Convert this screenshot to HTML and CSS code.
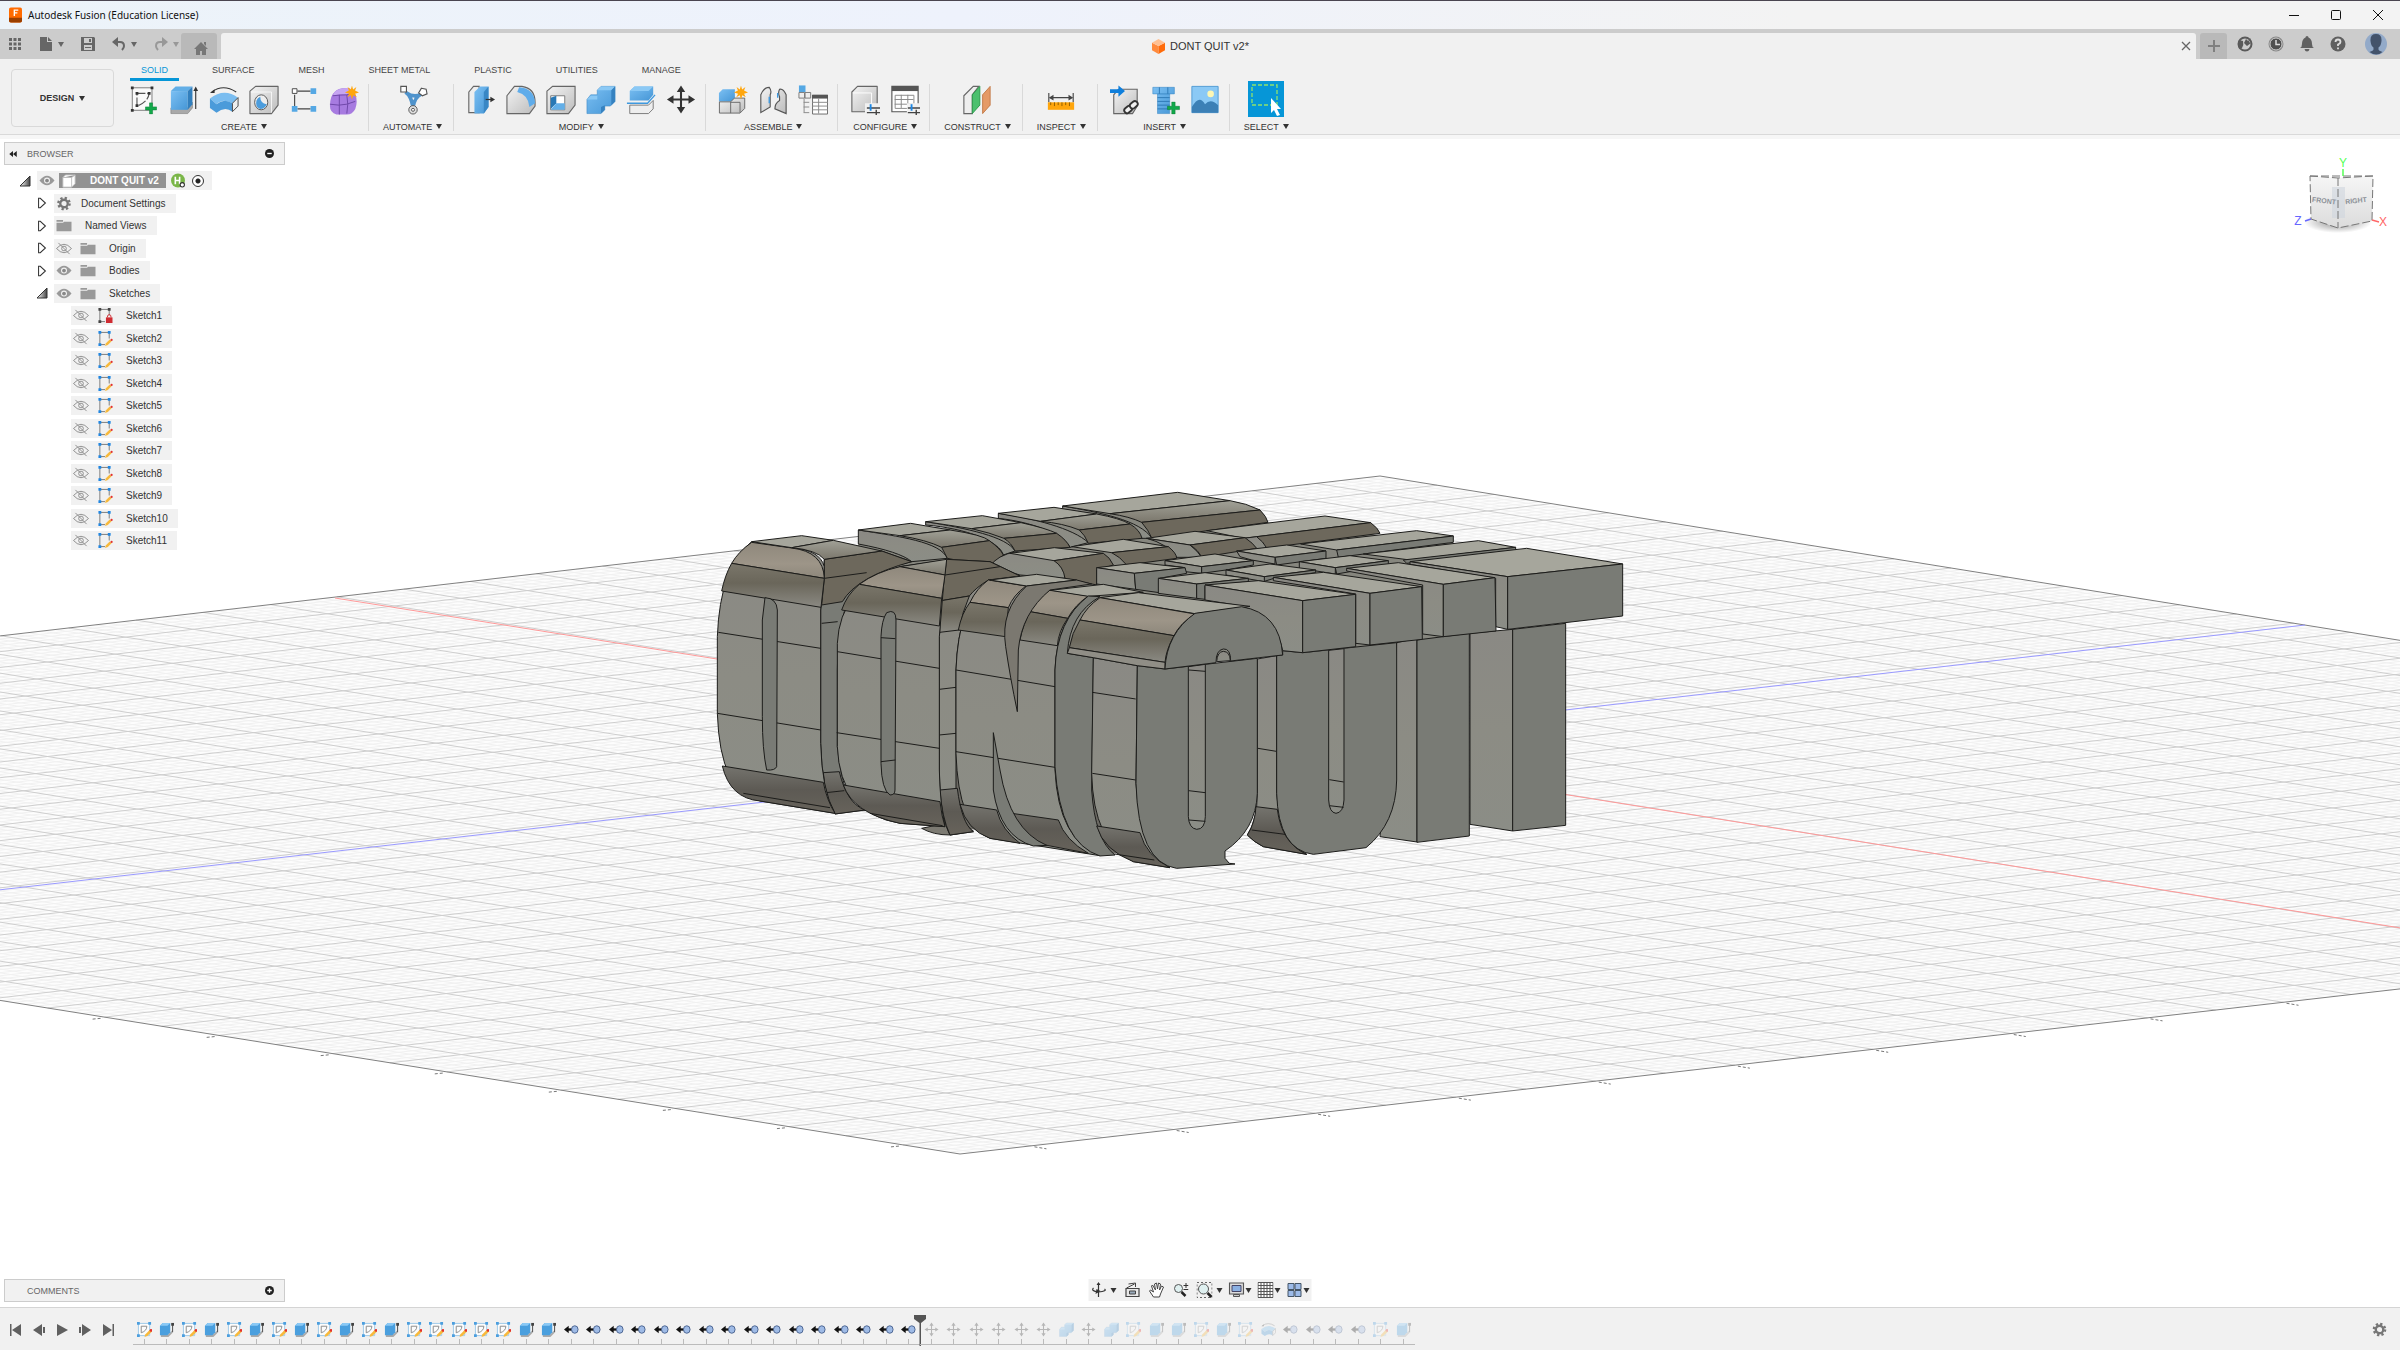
FILE: index.html
```
<!DOCTYPE html>
<html lang="en">
<head>
    <meta charset="UTF-8">
    <title>Autodesk Fusion (Education License)</title>
    <link rel="stylesheet" href="styles.css">
</head>
<body>
    <!-- Shared icons -->
    <svg class="sprite" aria-hidden="true">
        <defs>
            <linearGradient id="gBlue" x1="0" y1="0" x2="1" y2="1"><stop offset="0" stop-color="#7cc0f3"/><stop offset="1" stop-color="#4596d6"/></linearGradient>
            <linearGradient id="gGray" x1="0" y1="0" x2="1" y2="1"><stop offset="0" stop-color="#f4f4f4"/><stop offset="1" stop-color="#bcbcbc"/></linearGradient>
            <linearGradient id="gTri" x1="0" y1="0" x2="1" y2="0"><stop offset="0" stop-color="#fff"/><stop offset="1" stop-color="#444"/></linearGradient>
        </defs>
        <symbol id="i-star" viewBox="0 0 16 16"><path fill="#ffa60d" d="M8 0l1.300 4.500 3.700-2.800-1.500 4.100L16 8l-4.500 1.500 2 4-4-2.200L8 16l-1.300-4.700-4 2.200 2-4L0 8l4.500-2.200L3 1.700l3.700 2.800z"/></symbol>
        <symbol id="i-plus" viewBox="0 0 12 12"><path fill="#12a84a" stroke="#0c8136" stroke-width=".5" d="M4.500.5h3v4h4v3h-4v4h-3v-4h-4v-3h4z"/></symbol>
        <symbol id="i-sketch" viewBox="0 0 32 32">
            <path fill="#fafafa" stroke="#777" d="M3.500 3.500h21v24h-21z"/>
            <path fill="none" stroke="#555" stroke-width="1.200" d="M8.500 9.500h13q-1 9-13 13.500z" stroke-dasharray="9 2"/>
            <path fill="#333" d="M2 2h3v3H2zM23 2h3v3h-3zM2 26h3v3H2zM7 8h3v3H7zM20 8h3v3h-3zM7 21h3v3H7z"/>
            <use href="#i-plus" x="17" y="19" width="13" height="13"/>
        </symbol>
        <symbol id="i-extrude" viewBox="0 0 32 32">
            <path fill="#a9a9a9" stroke="#777" stroke-width=".6" d="M2 25l18 0 5-6v6l-5 6H2z"/>
            <path fill="#62aee6" d="M2 7l5-5h18l-5 5z"/><path fill="url(#gBlue)" d="M2 7h18v20H2z"/><path fill="#327fbd" d="M20 7l5-5v19l-5 6z"/>
            <path stroke="#333" stroke-width="1.200" d="M28.500 26V4"/><path fill="#333" d="M26 7l2.500-5L31 7z"/>
        </symbol>
        <symbol id="i-revolve" viewBox="0 0 32 32">
            <path fill="none" stroke="#333" stroke-width="1.200" d="M3 8q12-9 26 0"/><path fill="#333" d="M1 9l5-4v4z"/>
            <path fill="#7abdf0" d="M1 15Q16 3 31 14l-6 6Q15 14 8 21z"/><path fill="#4b9bda" d="M1 15l7 6v9l-7-5zM8 21q8-7 17-1v9q-8-6-17 1z"/><path fill="#eee" stroke="#444" d="M25 20l6-6v9l-6 6z"/>
        </symbol>
        <symbol id="i-hole" viewBox="0 0 32 32">
            <path fill="url(#gGray)" stroke="#666" stroke-width="1.200" stroke-linejoin="round" d="M1 7l6-5h24v20l-7 9H1z"/><path fill="none" stroke="#fff" stroke-width=".8" d="M2 8h22v22"/>
            <ellipse cx="13" cy="19" rx="7" ry="8" fill="#eee" stroke="#555"/><path fill="#4c9ddd" d="M12 13q0 7 7 8-2 5-7 5-6-2-4-9 1-3 4-4z"/>
        </symbol>
        <symbol id="i-pattern" viewBox="0 0 32 32">
            <path stroke="#444" stroke-width="1.200" d="M9 7h14M9 26h14M6 11v12"/><path fill="#fff" stroke="#444" d="M3.500 4.500h5v5h-5z"/><path fill="#55a8e4" d="M23 4h6v6h-6zM3 23h6v6H3zM23 23h6v6h-6z"/>
        </symbol>
        <symbol id="i-form" viewBox="0 0 32 32">
            <path fill="#a77be0" d="M6 8q4-5 16-4l6 6q3 8 0 16-3 6-9 6H8q-7-2-7-9 0-11 5-15z"/><path fill="#c6a5f1" d="M6 8q6-5 16-4l5 5q-5 1-8 2-8-1-15 1z"/><path fill="none" stroke="#6d45a6" d="M1 21q10 2 18 0l9-3M11 11v21M19 11q2 10 0 20M4 12q8-1 15-1l8-2"/>
            <use href="#i-star" x="17" y="1" width="15" height="15"/>
        </symbol>
        <symbol id="i-automate" viewBox="0 0 32 32">
            <path fill="none" stroke="#4f93cc" stroke-width="4" d="M8 8q6 4 8 16M25 10q-7 3-9 14M9 9q7 5 15 2"/><path fill="#fff" stroke="#555" stroke-width="1.200" d="M3 2h6v6H3zM25 4l5 1 1 5-5 2-4-3z"/><circle cx="16" cy="27" r="4.500" fill="#ddd" stroke="#555"/><circle cx="16" cy="27" r="1.600" fill="#fff" stroke="#555"/>
        </symbol>
        <symbol id="i-presspull" viewBox="0 0 32 32">
            <path fill="#eee" stroke="#666" stroke-width="1.200" d="M3 8l5-6h6v28H3z"/><path fill="url(#gBlue)" d="M9 8l6-6h9v22l-5 7H9z"/><path fill="#3987c5" d="M19 8l5-6v22l-5 7z"/><path stroke="#333" stroke-width="1.300" d="M21 16h7"/><path fill="#333" d="M26 13l5 3-5 3z"/>
        </symbol>
        <symbol id="i-fillet" viewBox="0 0 32 32">
            <path fill="url(#gGray)" stroke="#666" stroke-width="1.200" d="M1 12L9 2h8q14 2 14 17v4l-6 8H1z"/><path fill="#5facea" d="M14 3q16 1 17 17l-6 4Q24 11 12 8z"/>
        </symbol>
        <symbol id="i-shell" viewBox="0 0 32 32">
            <path fill="url(#gGray)" stroke="#666" stroke-width="1.200" d="M1 7l6-5h24v20l-7 9H1z"/><path fill="#fff" stroke="#777" d="M5 12h15v15H5z"/><path fill="#2878b5" d="M5 14l6-2v8l-6 6z"/><path fill="#63afe8" d="M5 27l6-7h9v7z"/>
        </symbol>
        <symbol id="i-combine" viewBox="0 0 32 32">
            <path fill="url(#gBlue)" stroke="#3c89c6" stroke-width=".6" d="M1 16l4-5h7V6l4-4h15v16l-5 5h-6v4l-4 4H1z"/><path fill="#8bc9f5" d="M1 16l4-4h7v4zM12 6l4-4h15l-4 4z"/><path fill="#3682c0" d="M27 6l4-4v16l-4 4zM16 24l4-2v5l-4 4z"/>
        </symbol>
        <symbol id="i-offset" viewBox="0 0 32 32">
            <path fill="url(#gBlue)" d="M4 7l5-5h20v9l-5 6H4z"/><path fill="#8bc9f5" d="M4 7l5-5h20l-5 5z"/><path fill="#eee" stroke="#777" d="M4 22h20l5-5v9l-5 5H4z"/><path fill="none" stroke="#3e99df" stroke-width="1.400" d="M1 20h22l8-9"/>
        </symbol>
        <symbol id="i-move" viewBox="0 0 32 32">
            <path stroke="#333" stroke-width="2.200" d="M16 5v22M5 16h22"/><path fill="#333" d="M16 1l4.500 7h-9zM16 31l4.500-7h-9zM1 16l7-4.500v9zM31 16l-7-4.500v9z"/>
        </symbol>
        <symbol id="i-component" viewBox="0 0 32 32">
            <path fill="url(#gBlue)" d="M1 9l4-4h13v13H1z"/><path fill="url(#gGray)" stroke="#666" d="M1.500 18.500h12l4-4h11v11l-5 5h-22zM13.500 18.500v12M13.500 19h10v11"/><use href="#i-star" x="17" y="1" width="15" height="15"/>
        </symbol>
        <symbol id="i-joint" viewBox="0 0 32 32">
            <path fill="url(#gGray)" stroke="#555" stroke-width="1.200" d="M3 11q3-8 9-8 3 4 1 8v13L3 30zM30 11q-3-7-7-6-2 4 0 8v4q-5 3-5 9l12 5z"/><path fill="none" stroke="#3e99df" stroke-width="1.500" d="M12 13v7M21 9v5"/>
        </symbol>
        <symbol id="i-bom" viewBox="0 0 32 32">
            <path fill="#55a8e4" d="M1 1h7v7H1z"/><path fill="#eee" stroke="#777" d="M1 8.500h6v6H1zM7.500 8.500h6v6h-6z"/><path fill="none" stroke="#888" d="M6.500 15v15M6 19h6M6 24h6M6 30h6"/><path fill="#fff" stroke="#666" d="M15.500 11.500h16v20h-16z"/><path fill="#555" d="M15 11h17v4H15z"/><path stroke="#888" d="M15 19h17M15 23h17M15 27h17M22 15v16"/>
        </symbol>
        <symbol id="i-configure" viewBox="0 0 32 32">
            <path fill="url(#gGray)" stroke="#666" stroke-width="1.200" stroke-linejoin="round" d="M2 8l6-6h21v24l-3 3H2z"/><path fill="none" stroke="#fff" d="M3 9h20v19"/><path fill="#f1f1f1" d="M16 20h16v12H16z"/><path stroke="#444" stroke-width="1.500" d="M18 25h14M18 30h14M28 27v6"/><path stroke="#1c87e5" stroke-width="2" d="M22 21v7"/>
        </symbol>
        <symbol id="i-table" viewBox="0 0 32 32">
            <path fill="#fff" stroke="#555" stroke-width="1.200" d="M2 2h28v27H2z"/><path fill="#555" d="M2 2h28v5H2z"/><path fill="none" stroke="#888" d="M5.500 11.500h20v14h-20zM5 16h20M5 21h20M12 11v14M19 11v14"/><path fill="#f1f1f1" d="M18 20h14v12H18z"/><path stroke="#444" stroke-width="1.500" d="M19 25h13M19 30h13M28 27v6"/><path stroke="#1c87e5" stroke-width="2" d="M23 21v7"/>
        </symbol>
        <symbol id="i-plane" viewBox="0 0 32 32">
            <path fill="#eee" stroke="#666" stroke-width="1.200" d="M2 12L12 2h6l-7 9v20H2z"/><path fill="#4cc06e" stroke="#2c9a4c" d="M11 11l8-9v20l-8 9z"/><path fill="#e59a66" stroke="#c37b48" d="M22 11l8-9v20l-8 9z"/>
        </symbol>
        <symbol id="i-measure" viewBox="0 0 32 32">
            <path stroke="#444" stroke-width="1.200" d="M3 9v10M29 9v10M5 14h22"/><path fill="#444" d="M3 14l5-3v6zM29 14l-5-3v6z"/><path fill="#ffa60d" d="M2 19h28v8H2z"/><path stroke="#8b5c00" d="M5 19v3M9 19v4M13 19v3M17 19v4M21 19v3M25 19v4"/>
        </symbol>
        <symbol id="i-insert" viewBox="0 0 32 32">
            <path fill="url(#gGray)" stroke="#666" stroke-width="1.200" d="M4 11l5-6h20v18l-5 8H4z"/><path fill="#0f7fdc" d="M0 5h9V1l7 6-7 6V9H0z"/><g fill="#f1f1f1" stroke="#333" stroke-width="2"><rect x="15" y="24" width="9" height="6" rx="3" transform="rotate(-40 19 27)"/><rect x="21" y="19" width="9" height="6" rx="3" transform="rotate(-40 25 22)"/></g>
        </symbol>
        <symbol id="i-fastener" viewBox="0 0 32 32">
            <path fill="url(#gBlue)" stroke="#3c89c6" stroke-width=".6" d="M3 3h23v7H3zM8 10h13v21H8z"/><path stroke="#2d78b4" d="M8 14h13M8 18h13M8 22h13M8 26h13M10 3v7M19 3v7"/><use href="#i-plus" x="18" y="18" width="14" height="14"/>
        </symbol>
        <symbol id="i-canvas" viewBox="0 0 32 32">
            <path fill="#8bc9f5" stroke="#4f9bd4" d="M2 2h28v28H2z"/><circle cx="22" cy="10" r="3.500" fill="#fdf7b4"/><path fill="#3c80b6" d="M2 24q8-14 14-3 6-7 14 1v8H2z"/>
        </symbol>
        <symbol id="i-select" viewBox="0 0 36 36">
            <path fill="#0696d7" d="M0 0h36v36H0z"/><path fill="none" stroke="#8fe26d" stroke-width="1.300" stroke-dasharray="4 2" d="M4 4h25v20H4z"/><path fill="#fff" d="M23 17v15l3-3 3 6 3-1-3-6h4z"/>
        </symbol>
        <symbol id="i-eye" viewBox="0 0 16 16"><path fill="#999" d="M0 8q8-10 16 0-8 10-16 0z"/><circle cx="8" cy="8" r="3.200" fill="#f1f1f1"/><circle cx="8" cy="8" r="2" fill="#888"/></symbol>
        <symbol id="i-eyeoff" viewBox="0 0 16 16"><path fill="none" stroke="#8c8c8c" d="M0 8q8-9 16 0-8 9-16 0zM2 2l12 12"/><circle cx="8" cy="8" r="2.500" fill="none" stroke="#8c8c8c"/></symbol>
        <symbol id="i-folder" viewBox="0 0 16 16"><path fill="#999" d="M0 2h7v2H0zM0 5h7l1-1h8v10H0z"/></symbol>
        <symbol id="i-gear" viewBox="0 0 16 16"><circle cx="8" cy="8" r="4" fill="none" stroke="#777" stroke-width="2.500"/><circle cx="8" cy="8" r="6" fill="none" stroke="#777" stroke-width="2.500" stroke-dasharray="2.400 2.312"/></symbol>
        <symbol id="i-open" viewBox="0 0 12 12"><path fill="url(#gTri)" stroke="#333" d="M11 1v10H1z"/></symbol>
        <symbol id="i-closed" viewBox="0 0 12 14"><path fill="#fff" stroke="#333" stroke-width="1.200" d="M2 1.500h2l6 5.500-6 5.500H2z"/></symbol>
        <symbol id="i-sk" viewBox="0 0 16 16"><path fill="none" stroke="#777" d="M2.500 1.500h10M2.500 2v12M12.500 2v6M3 14.500h5"/><path fill="#1f86e2" d="M1 0h3v3H1zM11 0h3v3h-3zM1 13h3v3H1z"/><path fill="#f7b93c" d="M9 13l4-4 2 2-4 4-3 1z"/><circle cx="15" cy="9.500" r="1.200" fill="#e2322d"/></symbol>
        <symbol id="i-sklock" viewBox="0 0 16 16"><path fill="none" stroke="#777" d="M2.500 1.500h10M2.500 2v12M12.500 2v6M3 14.500h5"/><path fill="#444" d="M1 0h3v3H1zM11 0h3v3h-3zM1 13h3v3H1z"/><path fill="#cf2b31" d="M9 10h7v6H9z"/><path fill="none" stroke="#cf2b31" d="M10.500 10q0-3 2-3t2 3"/></symbol>
        <symbol id="t-sketch" viewBox="0 0 16 16"><path fill="#fcfcfc" stroke="#9cc8e8" d="M1.500 1.500h12v13h-12z"/><path fill="none" stroke="#888" d="M4.500 4.500h6q0 5-6 7z"/><path fill="#4b9ede" d="M0 0h3v3H0zM12 0h3v3h-3zM0 13h3v3H0z"/><path fill="#f7b93c" d="M9 13l5-5 2 2-5 5-3 1z"/><circle cx="15" cy="9" r="1.500" fill="#e2322d"/></symbol>
        <symbol id="t-extrude" viewBox="0 0 16 16"><path fill="#aaa" d="M2 13h8l4-4v3l-4 4H2z"/><path fill="#4a9fde" d="M1 4l3-3h8v10l-3 3H1z"/><path fill="#8bc9f5" d="M1 4l3-3h8L9 4z"/><path stroke="#444" d="M14.500 2v9"/><path fill="#444" d="M13 1h3v3h-3z"/></symbol>
        <symbol id="t-shift" viewBox="0 0 16 16"><path stroke="#111" stroke-width="2.500" d="M3 8h6"/><path fill="#111" d="M0 8l5-4v8z"/><ellipse cx="11.500" cy="8" rx="3.500" ry="4" fill="#9fbbe6" stroke="#49628f"/></symbol>
        <symbol id="n-orbit" viewBox="0 0 16 16"><path fill="none" stroke="#333" stroke-width="1.200" d="M8 1v14M3 6q-3 3 5 4 9-1 6-3"/><path fill="#333" d="M5 12l5-3-4-2zM6 3l2-3 2 3z"/></symbol>
        <symbol id="n-look" viewBox="0 0 16 16"><path fill="#e8e8e8" stroke="#444" stroke-width="1.200" d="M1.500 6.500h13v8h-13z"/><path fill="#9ab" stroke="#444" d="M5 9h6v3H5z"/><path fill="none" stroke="#444" d="M2 6l8-4M4 2l7-1v4"/></symbol>
        <symbol id="n-pan" viewBox="0 0 16 16"><path fill="#fff" stroke="#444" stroke-linejoin="round" d="M5 15L1 9l1-1 3 2-2-6 1-1 3 5-1-6 2-1 1 6 1-6 2 1-1 6 2-4 2 1-3 7-1 3z"/></symbol>
        <symbol id="n-zoom" viewBox="0 0 16 16"><circle cx="6" cy="6.500" r="4" fill="#dff0f0" stroke="#555"/><path stroke="#222" stroke-width="2.500" d="M9 10l4 4"/><path stroke="#333" d="M11 3.500h5M13.500 1v5M11 7.500h5"/></symbol>
        <symbol id="n-window" viewBox="0 0 16 16"><path fill="none" stroke="#666" stroke-dasharray="2 2" d="M.5.5h15v15H.5z"/><circle cx="7" cy="7" r="5" fill="#dff0f0" stroke="#555"/><path stroke="#222" stroke-width="2.500" d="M11 11l4 4"/></symbol>
        <symbol id="n-display" viewBox="0 0 16 16"><path fill="#ddd" stroke="#555" stroke-width="1.200" d="M1 1h14v11H1z"/><path fill="#8ab0e2" stroke="#446" d="M3.500 3.500h9v6h-9z"/><path fill="#ccc" stroke="#555" d="M5 12.500h6v2H5z"/></symbol>
        <symbol id="n-grid" viewBox="0 0 16 16"><path fill="#fff" stroke="#555" d="M.5.500h15v15H.5zM3.500.5v15M6.500.5v15M9.500.5v15M12.500.5v15M.5 3.500h15M.5 6.500h15M.5 9.500h15M.5 12.500h15"/></symbol>
        <symbol id="n-views" viewBox="0 0 16 16"><path fill="#9dbbe8" stroke="#456" d="M1.500 1.500h6v6h-6zM8.500 1.500h6v6h-6zM1.500 8.500h6v6h-6zM8.500 8.500h6v6h-6z"/></symbol>
    </svg>

    <header class="title-bar">
        <svg class="app-logo" viewBox="0 0 14 16"><rect width="14" height="16" rx="2" fill="#ff6b00"/><path fill="#9a3f00" d="M0 11h14v3q0 2-2 2H2q-2 0-2-2z"/><path fill="#fff" d="M5 2h5v1.500H6.500V5H9v1.500H6.500V9H5z"/></svg>
        <h1 class="app-title">Autodesk Fusion (Education License)</h1>
        <div class="window-controls">
            <button aria-label="Minimize"><svg viewBox="0 0 12 12"><path d="M1 6.500h10"/></svg></button>
            <button aria-label="Maximize"><svg viewBox="0 0 12 12"><rect x="1.500" y="1.500" width="9" height="9" rx="1"/></svg></button>
            <button aria-label="Close"><svg viewBox="0 0 12 12"><path d="M1 1l10 10M11 1L1 11"/></svg></button>
        </div>
    </header>

    <div class="tab-row">
        <div class="quick">
            <button aria-label="Data panel"><svg viewBox="0 0 14 14"><path fill="#666" d="M1 1h3v3H1zM5.500 1h3v3h-3zM10 1h3v3h-3zM1 5.500h3v3H1zM5.500 5.500h3v3h-3zM10 5.500h3v3h-3zM1 10h3v3H1zM5.500 10h3v3h-3zM10 10h3v3h-3z"/></svg></button>
            <button aria-label="File"><svg viewBox="0 0 14 14"><path fill="#666" d="M1 0h7v5h5v9H1zM9 0l4 4H9z"/></svg><i class="caret"></i></button>
            <button aria-label="Save"><svg viewBox="0 0 14 14"><path fill="#666" d="M0 0h13l1 1v13H0z"/><path fill="#ccc" d="M3 1h8v5H3zM3 8h8v5H3z"/><path fill="#666" d="M8 2h2v3H8zM4 10h6v1H4z"/></svg></button>
            <button aria-label="Undo"><svg viewBox="0 0 14 14"><path fill="none" stroke="#666" stroke-width="2" d="M3 5h5q4 0 4 4 0 2-2 4"/><path fill="#666" d="M0 5l6-5v10z"/></svg><i class="caret"></i></button>
            <button class="off" aria-label="Redo"><svg viewBox="0 0 14 14"><path fill="none" stroke="#666" stroke-width="2" d="M11 5H6Q2 5 2 9q0 2 2 4"/><path fill="#666" d="M14 5L8 0v10z"/></svg><i class="caret"></i></button>
        </div>
        <button class="home-tab" aria-label="Home"><svg viewBox="0 0 14 14"><path fill="#777" d="M7 1l7 7h-2v6H8v-4H6v4H2V8H0zM10 1h2v4l-2-2z"/></svg></button>
        <div class="doc-tab">
            <span class="doc-name">
                <svg viewBox="0 0 14 16"><path fill="#ff8a3c" d="M0 4l7 3.500V16l-7-4z"/><path fill="#ff6b0a" d="M14 4L7 7.500V16l7-4z"/><path fill="#ffc092" d="M7 0l7 4-7 3.500L0 4z"/></svg>
                DONT QUIT v2*
            </span>
            <button class="doc-close" aria-label="Close document"><svg viewBox="0 0 12 12"><path fill="none" stroke="#666" stroke-width="1.300" d="M2 2l8 8M10 2l-8 8"/></svg></button>
        </div>
        <button class="new-tab" aria-label="New design"><svg viewBox="0 0 14 14"><path fill="#808080" d="M6 1h2v5h5v2H8v5H6V8H1V6h5z"/></svg></button>
        <div class="account">
            <button aria-label="Extensions"><svg viewBox="0 0 16 16"><circle cx="8" cy="8" r="6.500" fill="none" stroke="#5a5a5a" stroke-width="2"/><path fill="#5a5a5a" d="M2 4l4 1q1 4-1 7l-3 1-1-6zM7 7l2-4 2 2 3-3-2 4 2 1-4 3z"/></svg></button>
            <button aria-label="Job status"><svg viewBox="0 0 16 16"><circle cx="8" cy="8" r="7.500" fill="#888"/><circle cx="8" cy="8" r="6" fill="#505050" stroke="#ccc"/><path fill="none" stroke="#ddd" stroke-width="1.500" d="M8 4v4.500h4"/></svg></button>
            <button aria-label="Notifications"><svg viewBox="0 0 16 16"><path fill="#606060" d="M8 0q1.500 0 1.500 1.500Q13 3 13 8q0 3 2 4H1q2-1 2-4 0-5 3.500-6.500Q6.500 0 8 0zM5.500 13h5Q10 15.500 8 15.500T5.500 13z"/></svg></button>
            <button aria-label="Help"><svg viewBox="0 0 16 16"><circle cx="8" cy="8" r="7.500" fill="#606060"/><path fill="none" stroke="#ddd" stroke-width="1.800" d="M5.500 6q0-2.500 2.500-2.500T10.500 6q0 1.500-2.500 2.500V10M8 11.500v1.800"/></svg></button>
            <button class="avatar" aria-label="Profile"><svg viewBox="0 0 22 22"><circle cx="11" cy="11" r="11" fill="#93aac9"/><path fill="#43536b" d="M11 1q6 0 5.500 7-.5 5-3 6.500v2q0 1 4 2.500-6 5-13 0 4-1.500 4-2.500v-2Q6 13 5.500 8 5 1 11 1z"/></svg></button>
        </div>
    </div>

    <div class="ribbon">
        <button class="workspace">DESIGN <i class="caret"></i></button>
        <div class="ribbon-main">
            <nav class="ribbon-tabs">
                <a class="active" href="#solid">SOLID</a>
                <a href="#surface">SURFACE</a>
                <a href="#mesh">MESH</a>
                <a href="#sheet">SHEET METAL</a>
                <a href="#plastic">PLASTIC</a>
                <a href="#utilities">UTILITIES</a>
                <a href="#manage">MANAGE</a>
            </nav>
            <div class="groups">
                <section class="group">
                    <div class="tools">
                        <button aria-label="Create sketch"><svg><use href="#i-sketch"/></svg></button>
                        <button aria-label="Extrude"><svg><use href="#i-extrude"/></svg></button>
                        <button aria-label="Revolve"><svg><use href="#i-revolve"/></svg></button>
                        <button aria-label="Hole"><svg><use href="#i-hole"/></svg></button>
                        <button aria-label="Pattern"><svg><use href="#i-pattern"/></svg></button>
                        <button aria-label="Create form"><svg><use href="#i-form"/></svg></button>
                    </div>
                    <button class="group-label">CREATE<i class="caret"></i></button>
                </section>
                <section class="group">
                    <div class="tools"><button aria-label="Automated modeling"><svg><use href="#i-automate"/></svg></button></div>
                    <button class="group-label">AUTOMATE<i class="caret"></i></button>
                </section>
                <section class="group">
                    <div class="tools">
                        <button aria-label="Press pull"><svg><use href="#i-presspull"/></svg></button>
                        <button aria-label="Fillet"><svg><use href="#i-fillet"/></svg></button>
                        <button aria-label="Shell"><svg><use href="#i-shell"/></svg></button>
                        <button aria-label="Combine"><svg><use href="#i-combine"/></svg></button>
                        <button aria-label="Offset face"><svg><use href="#i-offset"/></svg></button>
                        <button aria-label="Move"><svg><use href="#i-move"/></svg></button>
                    </div>
                    <button class="group-label">MODIFY<i class="caret"></i></button>
                </section>
                <section class="group">
                    <div class="tools">
                        <button aria-label="New component"><svg><use href="#i-component"/></svg></button>
                        <button aria-label="Joint"><svg><use href="#i-joint"/></svg></button>
                        <button aria-label="Bill of materials"><svg><use href="#i-bom"/></svg></button>
                    </div>
                    <button class="group-label">ASSEMBLE<i class="caret"></i></button>
                </section>
                <section class="group">
                    <div class="tools">
                        <button aria-label="Configure model"><svg><use href="#i-configure"/></svg></button>
                        <button aria-label="Configuration table"><svg><use href="#i-table"/></svg></button>
                    </div>
                    <button class="group-label">CONFIGURE<i class="caret"></i></button>
                </section>
                <section class="group">
                    <div class="tools"><button aria-label="Offset plane"><svg><use href="#i-plane"/></svg></button></div>
                    <button class="group-label">CONSTRUCT<i class="caret"></i></button>
                </section>
                <section class="group">
                    <div class="tools"><button aria-label="Measure"><svg><use href="#i-measure"/></svg></button></div>
                    <button class="group-label">INSPECT<i class="caret"></i></button>
                </section>
                <section class="group">
                    <div class="tools">
                        <button aria-label="Insert derive"><svg><use href="#i-insert"/></svg></button>
                        <button aria-label="Insert fastener"><svg><use href="#i-fastener"/></svg></button>
                        <button aria-label="Canvas"><svg><use href="#i-canvas"/></svg></button>
                    </div>
                    <button class="group-label">INSERT<i class="caret"></i></button>
                </section>
                <section class="group">
                    <div class="tools"><button class="picked" aria-label="Select"><svg><use href="#i-select"/></svg></button></div>
                    <button class="group-label">SELECT<i class="caret"></i></button>
                </section>
            </div>
        </div>
    </div>

    <main class="viewport">
        <svg class="scene" viewBox="0 139 2400 1168" preserveAspectRatio="xMidYMid slice" role="img" aria-label="3D model">
            <defs>
                <linearGradient id="lit" x1="0" y1="0" x2="0" y2="1"><stop offset="0" stop-color="#8f887c"/><stop offset=".6" stop-color="#9d9588"/><stop offset="1" stop-color="#8d877b"/></linearGradient>
                <linearGradient id="dim" x1="0" y1="0" x2="0" y2="1"><stop offset="0" stop-color="#7a766a"/><stop offset=".45" stop-color="#6a665a"/><stop offset="1" stop-color="#8b8a83"/></linearGradient>
                <linearGradient id="low" x1="0" y1="0" x2="0" y2="1"><stop offset="0" stop-color="#75746e"/><stop offset=".5" stop-color="#5d5a54"/><stop offset="1" stop-color="#67635b"/></linearGradient>
                <linearGradient id="mid" x1="0" y1="0" x2="0" y2="1"><stop offset="0" stop-color="#a1a197"/><stop offset="1" stop-color="#7b776c"/></linearGradient>
                <linearGradient id="front" x1="0" y1="0" x2="0" y2="1"><stop offset="0" stop-color="#8a8984"/><stop offset=".5" stop-color="#8c8c84"/><stop offset="1" stop-color="#8b8d86"/></linearGradient>
            </defs>
            <path class="floor" d="M1380 476L3664 844 960 1154-1321 789z"/>
            <path id="minor" class="minor"/>
            <path id="major" class="major"/>
            <path class="edge" d="M1380 476L3664 844 960 1154-1321 789z"/>
            <path id="ticks" class="ticks"/>
            <path class="axis-x" d="M335 598L2620 963"/>
            <path class="axis-z" d="M-402 936L2305 625"/>

            <g class="model" transform="translate(700 470) scale(.33333)">
                <path class="base" fill="#86867e" d="M475 222L895 145 1433 100 1700 157 2260 220 2380 290V500L1100 600 400 500z"/>
                <path class="base" fill="#6b6963" d="M600 600H1350V1150L1240 1150 1010 1115 880 1095 820 1078 740 1085 600 1000z"/>
                <!-- rear row -->
                <path class="f" d="M1088 108v10C1210 135 1290 160 1326 205h30C1320 150 1200 128 1088 108z"/>
                <path class="t" d="M1088 108L1433 67 1590 92 1230 131z"/>
                <path fill="url(#mid)" d="M1230 131L1590 92Q1640 100 1680 120L1325 157Q1290 140 1230 131z"/>
                <path class="d" d="M1325 157L1680 120Q1700 140 1704 157L1356 205Q1345 180 1325 157z"/>
                <path class="f" d="M895 130v15C990 155 1090 190 1110 232L1165 218C1120 175 1000 145 895 130z"/>
                <path class="t" d="M895 130L1062 112 1190 132 1022 154z"/>
                <path fill="url(#mid)" d="M1022 154L1190 132Q1260 145 1290 162L1138 180Q1090 160 1022 154z"/>
                <path class="d" d="M1138 180L1290 162Q1320 180 1326 205L1165 220Q1155 195 1138 180z"/>
                <path class="f" d="M677 155v10C800 175 900 215 910 255L945 243C920 200 800 175 677 155z"/>
                <path class="t" d="M677 155L847 137 963 158 815 176z"/>
                <path fill="url(#mid)" d="M815 176L963 158Q1040 175 1070 190L912 205Q870 188 815 176z"/>
                <path class="d" d="M912 205L1070 190Q1100 210 1110 232L945 243Q935 220 912 205z"/>
                <path class="f" d="M475 180v42Q600 245 635 275L742 265C720 215 600 200 475 180z"/>
                <path class="t" d="M475 180L632 160 750 180 600 197z"/>
                <path fill="url(#mid)" d="M600 197L750 180Q850 195 868 212L725 232Q680 210 600 197z"/>
                <path class="d" d="M725 232L868 212Q900 235 910 255L870 290 742 265z"/>
                <!-- second row -->
                <path class="t" d="M1520 182L1875 138 2012 158 1630 205z"/>
                <path class="d" d="M1670 200L2012 158Q2035 175 2040 190L1700 234z"/>
                <path class="f" d="M1630 205L1670 200Q1690 215 1700 234L1670 237z"/>
                <path class="t" d="M1340 205L1485 184 1635 203 1470 225z"/>
                <path class="f" d="M1340 205L1470 225Q1495 245 1505 262L1430 262Q1400 220 1340 205z"/>
                <path class="d" d="M1470 225L1635 203Q1660 220 1670 235L1505 262Q1495 240 1470 225z"/>
                <path class="t" d="M1115 230L1270 208 1405 230 1235 248z"/>
                <path class="d" d="M1235 248L1405 230Q1430 250 1430 265L1280 285Q1260 260 1235 248z"/>
                <path class="f" d="M870 290Q890 255 950 245L1062 270Q1100 300 1095 325L960 315z"/>
                <path class="t" d="M930 250L1063 233 1210 250 1062 272z"/>
                <path class="d" d="M1062 272L1210 250Q1230 262 1240 285L1190 300V345L1095 325Q1090 290 1062 272z"/>
                <path class="t" d="M1802 222L2150 182 2260 198 1910 240z"/>
                <path class="r" d="M1910 240L2260 198V217L1915 262z"/>
                <path class="t" d="M1990 252L2335 212 2447 232 2130 270z"/>
                <path class="r" d="M2110 270L2447 232V245L2120 280z"/>
                <path class="t" d="M1610 243L1760 225 1878 243 1725 262z"/>
                <path class="r" d="M1725 262L1878 243V265L1730 285z"/>
                <path class="f" d="M1610 243L1725 262V282L1655 270 1620 260z"/>
                <path class="t" d="M1798 275L1950 257 2065 272 1906 293z"/>
                <path class="r" d="M1906 293L2065 272V285L1910 312z"/>
                <path class="f" d="M1798 275L1906 293V312L1798 295z"/>
                <path class="t" d="M1395 272L1545 252 1660 272 1505 290z"/>
                <path class="f" d="M1395 272L1505 290V310L1455 305V293L1395 285z"/>
                <path class="r" d="M1505 290L1660 272V285L1578 300 1505 310z"/>
                <path class="t" d="M1578 300L1710 282 1847 300 1693 320z"/>
                <path class="r" d="M1693 320L1847 300V308L1722 325 1690 335z"/>
                <path class="f" d="M1578 300L1693 320V335L1578 315z"/>
                <path class="t" d="M1190 293L1320 278 1455 293 1303 310z"/>
                <path class="f" d="M1190 293L1303 310 1307 358 1190 342z"/>
                <path class="r" d="M1303 310L1455 293 1460 310 1378 325V368L1307 358z"/>
                <path class="t" d="M1375 325L1515 308 1645 325 1490 342z"/>
                <path class="f" d="M1375 325L1490 342V385L1375 370z"/>
                <path class="r" d="M1490 342L1645 325V335L1515 348V388L1490 385z"/>
                <!-- T stems -->
                <path class="f" d="M2310 490L2438 478V1083L2310 1063z"/>
                <path class="r" d="M2438 478L2597 460V1066L2438 1083z"/>
                <path class="f" d="M2090 518L2151 505V1116L2040 1100z"/>
                <path class="r" d="M2151 510L2308 490V1098L2151 1117z"/>
                <!-- T bars -->
                <path class="t" d="M2130 275L2480 235 2768 282 2423 320z"/>
                <path class="f" d="M2130 275L2423 320V478L2387 470V325L2130 283z"/>
                <path class="r" d="M2423 320L2768 282V438L2423 478z"/>
                <path class="t" d="M1940 295L2095 278 2385 323 2230 343z"/>
                <path class="f" d="M1940 295L2230 343V500L2168 492V345L1940 303z"/>
                <path class="r" d="M2230 343L2385 323 2388 483 2230 500z"/>
                <path class="t" d="M1720 322L1870 307 2165 350 2010 370z"/>
                <path class="f" d="M1720 322L2010 370V525L1967 520V372L1720 332z"/>
                <path class="r" d="M2010 370L2165 350 2167 508 2010 525z"/>
                <path class="t" d="M1515 345L1675 332 1967 373 1808 392z"/>
                <!-- U -->
                <path class="f" d="M1672 567L1730 557V970Q1740 1110 1820 1153L1690 1130Q1660 1115 1642 1095 1672 1050 1672 970z"/>
                <path fill="url(#low)" d="M1668 1010L1732 1018Q1745 1120 1820 1153L1690 1130Q1660 1115 1642 1095 1665 1060 1668 1010z"/>
                <path fill="none" d="M1674 835l55 9M1655 1080l100 13"/>
                <path class="r" d="M1730 557L1748 555V542L1808 548 2090 518V930Q2088 1060 1998 1133L1840 1153Q1735 1140 1730 970z"/>
                <path class="f" d="M1886 541L1932 536V990Q1930 1028 1908 1030 1888 1028 1886 990zM1888 929l43 7M1888 1007l43 5"/>
                <path class="f" d="M1515 345L1808 392V548L1748 542Q1730 450 1625 408L1515 390z"/>
                <path class="r" d="M1808 392L1967 373V530L1808 548z"/>
                <!-- first letter -->
                <path class="r" d="M373 268L545 243 635 275Q560 290 500 325 412 380 412 600V830Q430 1010 495 1020L405 1032Q365 960 362 820V420z"/>
                <path class="d" d="M373 268L545 243 635 275Q470 320 427 395L365 405 373 325z"/>
                <path fill="url(#low)" d="M370 908L418 905Q440 1000 495 1020L405 1032Q375 980 370 908z"/>
                <path fill="none" d="M373 325L500 308M365 460l48-5M378 968l55-6"/>
                <path class="f" d="M155 215Q60 290 52 500V730Q60 970 180 993L405 1030Q365 960 362 820V420L373 290Q360 240 275 233z"/>
                <path fill="url(#lit)" d="M155 217L275 234Q370 245 373 325L95 280Q115 245 155 217z"/>
                <path fill="url(#dim)" d="M95 280L373 325 363 412 65 363Q75 315 95 280z"/>
                <path fill="url(#low)" d="M67 888L370 937Q380 990 405 1030L180 993Q90 985 67 888z"/>
                <path class="t" d="M155 215L305 197 400 211 275 233z"/>
                <path fill="url(#mid)" d="M275 233L400 211 545 243 373 268Q350 240 275 233z"/>
                <path fill="none" d="M55 487L362 535M52 730L362 780M130 970L390 1013"/>
                <path class="r" d="M195 383Q230 385 232 420L230 890Q225 902 200 900 187 840 187 740V450z"/>
                <!-- second letter -->
                <path fill="#7c7a72" d="M665 1075Q700 1095 750 1095L820 1083 735 1060z"/>
                <path class="f" d="M740 268L870 275 960 318 865 330Q775 400 768 600V960Q780 1060 820 1085L750 1095Q720 1040 718 900V500z"/>
                <path class="d" d="M740 268L870 275 960 318 865 330Q825 355 808 378L724 392z"/>
                <path fill="url(#dim)" d="M724 392L808 378Q785 430 778 480L719 487z"/>
                <path fill="url(#low)" d="M720 960L772 955Q785 1060 820 1085L750 1095Q725 1040 720 960z"/>
                <path fill="none" d="M735 315L900 290M718 658l50-6M718 795l50-5"/>
                <path class="f" d="M600 290Q420 350 412 520V830Q420 1030 600 1060L735 1070Q720 1000 718 900V500L737 270z"/>
                <path fill="url(#mid)" d="M600 290L740 268 735 315z"/>
                <path fill="url(#lit)" d="M600 290L735 315 725 385 478 343Q530 305 600 290z"/>
                <path fill="url(#dim)" d="M478 343L725 385 718 468 425 420Q440 375 478 343z"/>
                <path fill="url(#low)" d="M430 945L720 995Q725 1040 735 1070L600 1060Q460 1030 430 945z"/>
                <path fill="none" d="M412 545L718 595M410 788L718 835M510 1030L728 1067"/>
                <path class="r" d="M560 428Q588 415 588 450L585 960Q585 975 570 975 545 960 543 880V500Q545 450 560 428zM543 503l43 3M543 875l43-5"/>
                <!-- third letter -->
                <path class="f" d="M865 330L1165 378Q1070 450 1065 600V900Q1075 1110 1200 1157L1010 1127 870 1105Q775 1070 768 850V600Q775 400 865 330z"/>
                <path fill="url(#lit)" d="M865 330L978 348Q940 375 925 413L810 397Q830 355 865 330zM1050 360L1165 378Q1125 405 1103 445L990 425Q1010 385 1050 360z"/>
                <path fill="url(#dim)" d="M810 397L925 413 917 500 775 480Q785 430 810 397zM990 425L1103 445Q1075 485 1072 527L960 510Q970 460 990 425z"/>
                <path fill="url(#low)" d="M780 1003L890 1020Q905 1080 960 1120L870 1105Q800 1080 780 1003zM935 1030L1075 1050Q1095 1110 1165 1150L1010 1120Q960 1090 935 1030z"/>
                <path class="t" d="M870 330L1010 313 1130 330 980 348z"/>
                <path class="t" d="M1050 361L1210 343 1330 367 1165 379z"/>
                <path fill="none" d="M768 600L1065 650M768 845L1065 892"/>
                <path fill="#7b7870" d="M980 348Q900 420 917 530 930 620 952 725L955 540Q965 430 1050 360L1175 342 1130 330z"/>
                <path class="r" d="M880 788V960Q900 1100 1000 1128L1040 1126Q930 1080 900 900z"/>
                <path class="r" d="M1200 380Q1110 430 1102 550L1180 563 1175 960Q1185 1110 1245 1155L1200 1158Q1080 1120 1065 890V600Q1070 450 1165 378z"/>
                <!-- Q -->
                <path class="f" d="M1180 563L1312 587 1308 940Q1320 1140 1410 1193L1300 1175Q1180 1120 1175 910z"/>
                <path fill="url(#low)" d="M1190 1068L1320 1088Q1340 1160 1410 1193L1300 1175Q1210 1140 1190 1068z"/>
                <path fill="none" d="M1177 667l130 20M1177 910l130 20M1243 1152l120 18"/>
                <path class="r" d="M1312 587L1395 597 1672 565V970Q1668 1080 1575 1143V1165L1588 1180 1605 1182 1430 1195Q1315 1180 1308 940z"/>
                <path class="f" d="M1465 590L1516 583V1040Q1515 1078 1490 1078 1467 1075 1465 1040zM1466 600l50 4M1466 962l50 6M1466 1050l50 4"/>
                <path class="t" d="M1200 383L1315 368 1650 409 1485 431z"/>
                <path fill="url(#lit)" d="M1200 383L1485 432Q1440 460 1422 497L1140 450Q1160 410 1200 383z"/>
                <path fill="url(#dim)" d="M1140 450L1422 497Q1398 540 1395 577L1108 533Q1115 490 1140 450z"/>
                <path fill="#908e86" d="M1108 533L1395 577V597L1312 587 1180 563 1102 550z"/>
                <path class="r" d="M1395 597Q1400 490 1485 430L1625 410Q1740 430 1748 555L1592 573Q1592 535 1570 537 1548 540 1548 578z"/>
                <path class="f" d="M1550 575Q1552 545 1570 544 1590 545 1591 572z"/>
            </g>
        </svg>

        <section class="panel browser">
            <h2 class="panel-head">
                <svg class="fold" viewBox="0 0 10 8"><path d="M5 0v8L0 4zM10 0v8L5 4z"/></svg>
                BROWSER
                <button aria-label="Hide browser"><svg viewBox="0 0 10 10"><circle cx="5" cy="5" r="5" fill="#222"/><path stroke="#fff" stroke-width="1.500" d="M2.500 5h5"/></svg></button>
            </h2>
            <ul class="tree">
                <li class="root"><svg class="twist"><use href="#i-open"/></svg><span class="chip"><svg><use href="#i-eye"/></svg><b class="doc"><svg viewBox="0 0 16 16"><path fill="#fff" stroke="#bbb" d="M1 4l3-3h11v10l-4 4H1zM1 4h10l4-3M11 4v11"/></svg>DONT QUIT v2</b><svg class="badge" viewBox="0 0 14 14"><circle cx="7" cy="7" r="6.500" fill="#7ab648"/><path fill="none" stroke="#fff" stroke-width="1.500" d="M4.500 3.500v7M8.500 3.500v7M4.500 7h4"/><circle cx="11" cy="11" r="2" fill="#fff" stroke="#333"/></svg><input type="radio" name="active" aria-label="Activate component" checked></span></li>
                <li><svg class="twist"><use href="#i-closed"/></svg><span class="chip"><svg><use href="#i-gear"/></svg><span class="name near">Document Settings</span></span></li>
                <li><svg class="twist"><use href="#i-closed"/></svg><span class="chip"><svg><use href="#i-folder"/></svg><span class="name">Named Views</span></span></li>
                <li><svg class="twist"><use href="#i-closed"/></svg><span class="chip"><svg><use href="#i-eyeoff"/></svg><svg><use href="#i-folder"/></svg><span class="name">Origin</span></span></li>
                <li><svg class="twist"><use href="#i-closed"/></svg><span class="chip"><svg><use href="#i-eye"/></svg><svg><use href="#i-folder"/></svg><span class="name">Bodies</span></span></li>
                <li><svg class="twist"><use href="#i-open"/></svg><span class="chip"><svg><use href="#i-eye"/></svg><svg><use href="#i-folder"/></svg><span class="name">Sketches</span></span></li>
                <li class="leaf"><span class="chip"><svg><use href="#i-eyeoff"/></svg><svg><use href="#i-sklock"/></svg><span class="name">Sketch1</span></span></li>
                <li class="leaf"><span class="chip"><svg><use href="#i-eyeoff"/></svg><svg><use href="#i-sk"/></svg><span class="name">Sketch2</span></span></li>
                <li class="leaf"><span class="chip"><svg><use href="#i-eyeoff"/></svg><svg><use href="#i-sk"/></svg><span class="name">Sketch3</span></span></li>
                <li class="leaf"><span class="chip"><svg><use href="#i-eyeoff"/></svg><svg><use href="#i-sk"/></svg><span class="name">Sketch4</span></span></li>
                <li class="leaf"><span class="chip"><svg><use href="#i-eyeoff"/></svg><svg><use href="#i-sk"/></svg><span class="name">Sketch5</span></span></li>
                <li class="leaf"><span class="chip"><svg><use href="#i-eyeoff"/></svg><svg><use href="#i-sk"/></svg><span class="name">Sketch6</span></span></li>
                <li class="leaf"><span class="chip"><svg><use href="#i-eyeoff"/></svg><svg><use href="#i-sk"/></svg><span class="name">Sketch7</span></span></li>
                <li class="leaf"><span class="chip"><svg><use href="#i-eyeoff"/></svg><svg><use href="#i-sk"/></svg><span class="name">Sketch8</span></span></li>
                <li class="leaf"><span class="chip"><svg><use href="#i-eyeoff"/></svg><svg><use href="#i-sk"/></svg><span class="name">Sketch9</span></span></li>
                <li class="leaf"><span class="chip"><svg><use href="#i-eyeoff"/></svg><svg><use href="#i-sk"/></svg><span class="name">Sketch10</span></span></li>
                <li class="leaf"><span class="chip"><svg><use href="#i-eyeoff"/></svg><svg><use href="#i-sk"/></svg><span class="name">Sketch11</span></span></li>
            </ul>
        </section>

        <svg class="view-cube" viewBox="0 0 100 90" role="img" aria-label="View cube">
            <defs>
                <radialGradient id="shade"><stop offset="0" stop-color="#000" stop-opacity=".45"/><stop offset="1" stop-color="#000" stop-opacity="0"/></radialGradient>
                <linearGradient id="face" x1="0" y1="0" x2="0" y2="1"><stop offset="0" stop-color="#f6f6f6"/><stop offset="1" stop-color="#dcdcdc"/></linearGradient>
            </defs>
            <ellipse cx="48" cy="66" rx="34" ry="11" fill="url(#shade)"/>
            <path fill="url(#face)" d="M20 20l28 2v50l-27-9zM48 22l35-2-1 45-34 7z"/>
            <path fill="#cfd5de" opacity=".6" d="M42 31h13v31H42z"/>
            <path fill="none" stroke="#777" stroke-dasharray="8 3" d="M20 20h63l-1 45-34 7-27-9zM20 20l28 2 35-2M48 22v50"/>
            <path stroke="#5f5" stroke-width="1.500" d="M53 13v7"/><path stroke="#66f" stroke-width="1.500" d="M15 65l6-2"/><path stroke="#f66" stroke-width="1.500" d="M82 64l7 2"/>
            <text class="y" x="53" y="11">Y</text><text class="z" x="8" y="69">Z</text><text class="x" x="93" y="70">X</text>
            <text class="side" transform="rotate(7 33 45)" x="34" y="47">FRONT</text><text class="side" transform="rotate(-6 66 45)" x="66" y="47">RIGHT</text>
        </svg>

        <section class="panel comments">
            <h2 class="panel-head">
                COMMENTS
                <button aria-label="Show comments"><svg viewBox="0 0 10 10"><circle cx="5" cy="5" r="5" fill="#222"/><path stroke="#fff" stroke-width="1.500" d="M2.500 5h5M5 2.500v5"/></svg></button>
            </h2>
        </section>

        <nav class="nav-bar">
            <button aria-label="Orbit"><svg><use href="#n-orbit"/></svg><i class="caret"></i></button>
            <button aria-label="Look at"><svg><use href="#n-look"/></svg></button>
            <button aria-label="Pan"><svg><use href="#n-pan"/></svg></button>
            <button aria-label="Zoom"><svg><use href="#n-zoom"/></svg></button>
            <button aria-label="Zoom window"><svg><use href="#n-window"/></svg><i class="caret"></i></button>
            <button class="tight" aria-label="Display settings"><svg><use href="#n-display"/></svg><i class="caret"></i></button>
            <button class="tight" aria-label="Grid and snaps"><svg><use href="#n-grid"/></svg><i class="caret"></i></button>
            <button class="tight" aria-label="Viewports"><svg><use href="#n-views"/></svg><i class="caret"></i></button>
        </nav>
    </main>

    <footer class="timeline">
        <div class="playback">
            <button aria-label="Go to start"><svg viewBox="0 0 12 12"><path d="M0 0h1.500v12H0zM11 0v12L2 6z"/></svg></button>
            <button aria-label="Step back"><svg viewBox="0 0 12 12"><path d="M9 0v12L0 6zM10 3h2v6h-2z"/></svg></button>
            <button aria-label="Play"><svg viewBox="0 0 12 12"><path d="M1 0l11 6-11 6z"/></svg></button>
            <button aria-label="Step forward"><svg viewBox="0 0 12 12"><path d="M3 0v12l9-6zM0 3h2v6H0z"/></svg></button>
            <button aria-label="Go to end"><svg viewBox="0 0 12 12"><path d="M10.500 0H12v12h-1.500zM1 0v12l9-6z"/></svg></button>
        </div>
        <ol class="features" id="features"></ol>
        <button class="prefs" aria-label="Timeline settings"><svg><use href="#i-gear"/></svg></button>
    </footer>

    <script src="script.js"></script>
</body>
</html>
```

FILE: styles.css
```
* {
    box-sizing: border-box;
}

body {
    margin: 0;
    height: 100vh;
    display: flex;
    flex-direction: column;
    overflow: hidden;
    border-top: 1px solid #4a4550;
    background: #fff;
    color: #333;
    font-family: "Liberation Sans", Arial, sans-serif;
    font-size: 10px;
}

button {
    display: flex;
    align-items: center;
    justify-content: center;
    padding: 0;
    border: none;
    background: none;
    color: inherit;
    font: inherit;
    cursor: pointer;
}

svg {
    display: block;
    flex: none;
}

.sprite {
    position: absolute;
    width: 0;
    height: 0;
}

.caret {
    border: 3px solid transparent;
    border-top: 5px solid #333;
    border-bottom: 0;
}

/* Title bar */
.title-bar {
    flex: none;
    height: 28px;
    display: flex;
    align-items: center;
    padding: 0 16px 0 9px;
    background: linear-gradient(90deg, #ecf3f9, #eef2fc 40%, #f3f3f3 75%);
}

.app-logo {
    width: 13px;
    height: 16px;
}

.app-title {
    flex: 1;
    margin: 0 0 0 6px;
    color: #111;
    font-family: "Noto Sans", "Segoe UI", sans-serif;
    font-size: 10px;
    font-weight: 400;
}

.window-controls {
    display: flex;
    gap: 30px;
}

.window-controls svg {
    width: 12px;
    height: 12px;
    fill: none;
    stroke: #111;
}

/* Quick access and document tabs */
.tab-row {
    flex: none;
    height: 30px;
    padding-top: 4px;
    display: flex;
    background: #ccc;
}

.quick {
    width: 181px;
    display: flex;
    align-items: center;
    gap: 17px;
    padding: 0 0 4px 8px;
}

.quick button {
    gap: 5px;
}

.quick svg,
.home-tab svg,
.new-tab svg {
    width: 14px;
    height: 14px;
}

.quick .caret {
    border-top-color: #666;
}

.off {
    opacity: 0.5;
}

.home-tab {
    width: 36px;
    padding: 3px 0 0 4px;
    border-radius: 3px 3px 0 0;
    background: #b9b9b9;
}

.doc-tab {
    flex: 1;
    margin: 0 4px;
    display: flex;
    align-items: center;
    padding-right: 4px;
    border-radius: 3px 3px 0 0;
    background: #f1f1f1;
}

.doc-name {
    flex: 1;
    display: flex;
    align-items: center;
    justify-content: center;
    gap: 5px;
    font-size: 11px;
}

.doc-name svg {
    width: 13px;
    height: 15px;
}

.doc-close svg {
    width: 12px;
    height: 12px;
}

.new-tab {
    width: 27px;
    border-radius: 3px 3px 0 0;
    background: #b9b9b9;
}

.account {
    display: flex;
    align-items: center;
    gap: 15px;
    padding: 0 13px 4px 10px;
}

.account svg {
    width: 16px;
    height: 16px;
}

.account .avatar {
    margin-left: 4px;
}

.account .avatar svg {
    width: 22px;
    height: 22px;
}

/* Ribbon */
.ribbon {
    flex: none;
    height: 80px;
    display: flex;
    padding-left: 11px;
    border-bottom: 4px solid #f6f6f6;
    background: #f1f1f1;
    box-shadow: inset 0 -1px #d9d9d9;
}

.workspace {
    width: 103px;
    height: 58px;
    margin: 10px 4px 0 0;
    gap: 5px;
    border: 1px solid #d9d9d9;
    border-radius: 4px;
    font-size: 9px;
    font-weight: 700;
}

.ribbon-tabs {
    height: 22px;
    display: flex;
    gap: 22px;
    padding-left: 12px;
}

.ribbon-tabs a {
    padding: 0 11px;
    color: #444;
    font-size: 9px;
    line-height: 22px;
    text-decoration: none;
}

.ribbon-tabs .active {
    border-bottom: 3px solid #0696d7;
    color: #0696d7;
}

.groups {
    display: flex;
    gap: 1px;
}

.group {
    display: flex;
    flex-direction: column;
    align-items: center;
    padding: 0 5px 0 6px;
    background: linear-gradient(#d9d9d9, #d9d9d9) right 3px / 1px 47px no-repeat;
}

.group:last-child {
    background: none;
}

.tools {
    display: flex;
    height: 36px;
}

.tools button {
    width: 40px;
}

.tools svg {
    width: 30px;
    height: 31px;
}

.tools .picked svg {
    width: 36px;
    height: 36px;
}

.group-label {
    height: 19px;
    padding: 0 7px;
    gap: 4px;
    font-size: 9px;
}

/* Viewport */
.viewport {
    position: relative;
    flex: 1;
    min-height: 0;
    overflow: hidden;
}

.scene {
    position: absolute;
    width: 100%;
    height: 100%;
}

.floor {
    fill: #fdfdfd;
}

.minor,
.major,
.edge,
.ticks,
.axis-x,
.axis-z {
    fill: none;
}

.minor {
    stroke: #f1f1f1;
}

.major {
    stroke: #cecece;
}

.edge {
    stroke: #808080;
}

.ticks {
    stroke: #777;
    stroke-dasharray: 3 2;
}

.axis-x {
    stroke: #f99;
}

.axis-z {
    stroke: #99f;
}

.model path {
    stroke: #1c1c1a;
    stroke-width: 3px;
    stroke-linejoin: round;
}

.model .base {
    stroke: none;
}

.model .t {
    fill: #a6a69c;
}

.model .f {
    fill: url(#front);
}

.model .r {
    fill: #797b75;
}

.model .d {
    fill: #6d685c;
}

.panel {
    position: absolute;
    left: 4px;
    width: 281px;
}

.browser {
    top: 3px;
}

.comments {
    bottom: 5px;
}

.panel-head {
    height: 23px;
    margin: 0;
    display: flex;
    align-items: center;
    padding: 0 10px 0 22px;
    border: 1px solid #ccc;
    background: #f1f1f1;
    color: #666;
    font-size: 9px;
    font-weight: 400;
}

.panel-head button {
    margin-left: auto;
}

.panel-head button svg {
    width: 9px;
    height: 9px;
}

.fold {
    width: 10px;
    height: 6px;
    margin: 0 9px 0 -19px;
    fill: #222;
}

.tree {
    height: 379px;
    margin: 6px 0 0;
    padding: 0;
    display: flex;
    flex-direction: column;
    justify-content: space-between;
    list-style: none;
}

.tree li {
    height: 19px;
    display: flex;
    align-items: center;
    padding-left: 32px;
}

.tree .root {
    padding-left: 15px;
}

.tree .leaf {
    padding-left: 67px;
}

.twist {
    width: 12px;
    height: 12px;
    margin-right: 6px;
}

.chip {
    height: 19px;
    display: flex;
    align-items: center;
    gap: 8px;
    padding: 0 10px 0 2px;
    background: #f1f1f1;
}

.chip > svg {
    width: 16px;
    height: 15px;
}

.name {
    margin-left: 5px;
}

.name.near {
    margin-left: 1px;
}

.root .chip {
    gap: 4px;
    padding-right: 8px;
}

.doc {
    height: 15px;
    display: flex;
    align-items: center;
    gap: 13px;
    padding: 0 7px 0 2px;
    background: #929292;
    color: #fff;
}

.doc svg {
    width: 16px;
    height: 14px;
}

.chip input {
    appearance: none;
    width: 12px;
    height: 12px;
    margin: 0 0 0 2px;
    border: 1px solid #333;
    border-radius: 50%;
    background: radial-gradient(#222 2px, #fff 3px);
}

.view-cube {
    position: absolute;
    top: 17px;
    right: 10px;
    width: 100px;
    height: 90px;
    text-anchor: middle;
    font-size: 12px;
}

.view-cube .x {
    fill: #f66;
}

.view-cube .y {
    fill: #5f5;
}

.view-cube .z {
    fill: #66f;
}

.view-cube .side {
    fill: #8b9097;
    font-size: 7px;
    font-weight: 700;
}

.nav-bar {
    position: absolute;
    bottom: 6px;
    left: 50%;
    transform: translateX(-50%);
    height: 22px;
    display: flex;
    align-items: center;
    gap: 8px;
    padding: 0 2px;
    background: #f1f1f1;
}

.nav-bar button {
    gap: 4px;
}

.nav-bar .tight {
    gap: 1px;
    margin-left: -2px;
}

.nav-bar svg {
    width: 16px;
    height: 16px;
}

/* Timeline */
.timeline {
    flex: none;
    height: 43px;
    display: flex;
    align-items: flex-start;
    border-top: 1px solid #d4d4d4;
    background: #f1f1f1;
}

.playback {
    width: 133px;
    display: flex;
    gap: 11px;
    padding: 16px 0 0 10px;
}

.playback svg {
    width: 12px;
    height: 12px;
    fill: #606060;
}

.features {
    width: 1282px;
    margin: 0;
    padding: 14px 0 0;
    display: flex;
    list-style: none;
}

.features li {
    position: relative;
    flex: 1;
    height: 23px;
    display: flex;
    justify-content: center;
    background: linear-gradient(#bbb, #bbb) center bottom / 1px 5px no-repeat;
    border-bottom: 1px solid #bbb;
}

.features svg {
    width: 15px;
    height: 15px;
}

.features .pending svg {
    opacity: 0.3;
}

.features .marker {
    position: absolute;
    top: -7px;
    right: -6px;
    width: 12px;
    height: 31px;
}

.prefs {
    margin: 14px 13px 0 auto;
}

.prefs svg {
    width: 15px;
    height: 15px;
}
```

FILE: script.js
```
// Floor grid: four corners of the plane, 40 cells a side
const L = [-1321, 789], T = [1380, 476], R = [3664, 844], B = [960, 1154];
const cells = 40;

const lerp = (p, q, t) => [p[0] + (q[0] - p[0]) * t, p[1] + (q[1] - p[1]) * t];
const bend = t => t + 0.058 * t * (1 - t);
const line = (p, q) => `M${p[0].toFixed(1)} ${p[1].toFixed(1)}L${q[0].toFixed(1)} ${q[1].toFixed(1)}`;

function gridPath(steps, skip) {
    let d = '';
    for (let i = 1; i < steps; i++) {
        if (skip && i % skip === 0) continue;
        const t = i / steps;
        d += line(lerp(L, T, bend(t)), lerp(B, R, bend(t)));
        d += line(lerp(L, B, t), lerp(T, R, t));
    }
    return d;
}

document.getElementById('major').setAttribute('d', gridPath(cells));
document.getElementById('minor').setAttribute('d', gridPath(cells * 5, 5));

// Ruler marks along the two near edges
let ticks = '';
for (let i = 1; i < cells; i += 2) {
    const [x1, y1] = lerp(L, B, i / cells);
    ticks += `M${x1 - 12} ${y1 + 2}l10 -1`;
    const [x2, y2] = lerp(B, R, bend(i / cells));
    ticks += `M${x2 + 3} ${y2 + 1}l12 2`;
}
document.getElementById('ticks').setAttribute('d', ticks);

// Timeline features in build order, the marker sits after the rolled-back point
const icons = { S: 't-sketch', E: 't-extrude', M: 't-shift', V: 'i-move', C: 'i-combine', R: 'i-revolve' };
const done = 'SESESESESESESSSSSEE' + 'M'.repeat(16);
const pending = 'VVVVVVCVCSEESESRMMMMSE';
const list = document.getElementById('features');

[...done + pending].forEach((key, i) => {
    const li = document.createElement('li');
    if (i >= done.length) li.className = 'pending';
    li.innerHTML = `<svg><use href="#${icons[key]}"/></svg>`;
    if (i === done.length - 1) {
        li.innerHTML += '<svg class="marker" viewBox="0 0 12 31"><path fill="#555" d="M0 0h12v4L7 8v23H5.500V8L0 4z"/></svg>';
    }
    list.appendChild(li);
});
```
